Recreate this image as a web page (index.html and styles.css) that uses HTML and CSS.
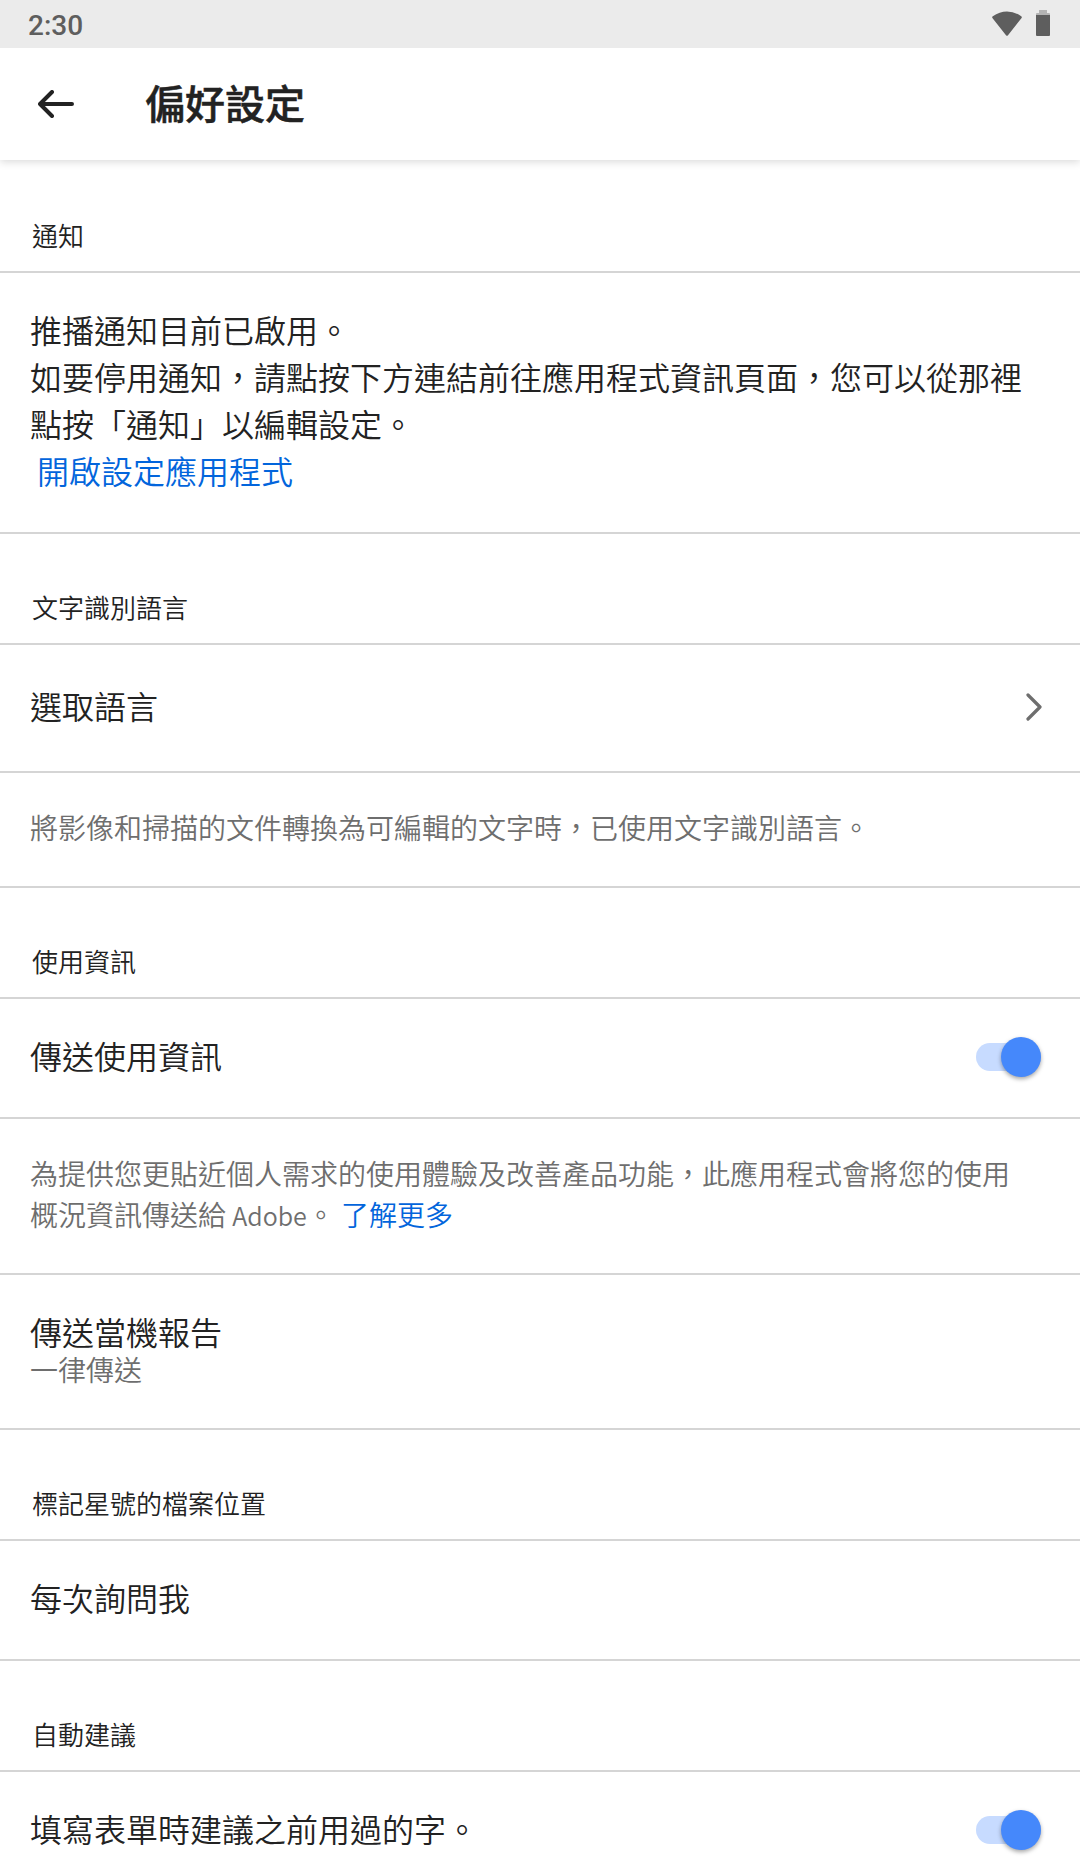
FILE: index.html
```
<!DOCTYPE html>
<html lang="zh-Hant">
<head>
    <meta charset="UTF-8">
    <title>偏好設定</title>
    <link rel="stylesheet" href="styles.css">
</head>
<body>
    <div class="statusbar">
        <span class="time">2:30</span>
        <svg class="wifi" width="32" height="26" viewBox="0 0 32 26">
            <path d="M1.6 8.2Q0.6 7.2 1.8 6.3Q8.5 1.5 16 1.5T30.2 6.3Q31.4 7.2 30.4 8.2L17 25.2Q16 26.3 15 25.2Z" fill="#5e5e5e"/>
        </svg>
        <svg class="battery" width="14" height="26" viewBox="0 0 14 26">
            <path d="M3 0H11V3H13Q14 3 14 4V5H0V4Q0 3 1 3H3Z" fill="#b4b4b4"/>
            <path d="M0 5H14V25Q14 26 13 26H1Q0 26 0 25Z" fill="#5e5e5e"/>
        </svg>
    </div>
    <header class="topbar">
        <svg class="back" width="36" height="28" viewBox="0 0 36 28">
            <path d="M34 14H2M14 2L2 14L14 26" fill="none" stroke="#222" stroke-width="4" stroke-linecap="round" stroke-linejoin="round"/>
        </svg>
        <h1>偏好設定</h1>
    </header>
    <main>
        <h2>通知</h2>
        <div class="row notice">
            <p>推播通知目前已啟用。<br>如要停用通知，請點按下方連結前往應用程式資訊頁面，您可以從那裡點按「通知」以編輯設定。<br><a class="indent" href="#">開啟設定應用程式</a></p>
        </div>

        <h2>文字識別語言</h2>
        <div class="row select">
            <span class="label">選取語言</span>
            <svg class="chevron" width="16" height="28" viewBox="0 0 16 28">
                <path d="M2 2L14 14L2 26" fill="none" stroke="#6e6e6e" stroke-width="3.2" stroke-linecap="round" stroke-linejoin="round"/>
            </svg>
        </div>
        <div class="row desc ocr">
            <p>將影像和掃描的文件轉換為可編輯的文字時，已使用文字識別語言。</p>
        </div>

        <h2>使用資訊</h2>
        <div class="row">
            <span class="label">傳送使用資訊</span>
            <span class="switch"><span class="thumb"></span></span>
        </div>
        <div class="row desc usage">
            <p>為提供您更貼近個人需求的使用體驗及改善產品功能，此應用程式會將您的使用概況資訊傳送給 <span class="latin">Adobe</span>。 <a href="#">了解更多</a></p>
        </div>
        <div class="row crash">
            <span>傳送當機報告</span>
            <span class="value">一律傳送</span>
        </div>

        <h2>標記星號的檔案位置</h2>
        <div class="row">
            <span class="label">每次詢問我</span>
        </div>

        <h2>自動建議</h2>
        <div class="row">
            <span class="label">填寫表單時建議之前用過的字。</span>
            <span class="switch"><span class="thumb"></span></span>
        </div>
    </main>
</body>
</html>
```
FILE: styles.css
```
* {
    box-sizing: border-box;
}
body {
    margin: 0;
    height: 1868px;
    overflow: hidden;
    background-color: #fff;
    color: #222;
    font-family: "Noto Sans CJK TC", sans-serif;
    font-size: 32px;
    font-weight: 350;
}
h1, h2, p {
    margin: 0;
}
a {
    color: #0265dc;
    text-decoration: none;
}

.statusbar {
    position: relative;
    z-index: 1;
    display: flex;
    height: 48px;
    padding: 10px 30px 0 28px;
    background-color: #ebebeb;
}
.time {
    flex: 1;
    font-family: Roboto, sans-serif;
    font-size: 28px;
    font-weight: 500;
    line-height: 31px;
    color: #5e5e5e;
}
.wifi {
    margin-right: 13px;
}

.topbar {
    display: flex;
    align-items: center;
    height: 112px;
    padding-left: 38px;
    box-shadow: 0 2px 8px rgba(0, 0, 0, 0.15);
}
.topbar h1 {
    margin-left: 71px;
    padding-bottom: 4px;
    font-size: 40px;
    font-weight: 500;
    line-height: 60px;
    -webkit-text-stroke: 0.5px #222;
}

main {
    padding-top: 2px;
}
h2 {
    height: 111px;
    padding: 55px 32px 0;
    border-bottom: 2px solid #d5d5d5;
    font-size: 26px;
    font-weight: 350;
    line-height: 36px;
}
.row {
    display: flex;
    align-items: center;
    justify-content: space-between;
    height: 120px;
    padding: 0 30px 2px;
    border-bottom: 2px solid #d5d5d5;
}
.row p {
    padding-bottom: 3px;
}
.label {
    padding-bottom: 5px;
}
.notice {
    height: 261px;
    padding-right: 40px;
    line-height: 47px;
}
.indent {
    margin-left: 7px;
}
.select {
    height: 128px;
}
.chevron {
    margin-right: 8px;
}
.desc {
    padding-right: 60px;
    color: #6e6e6e;
    font-size: 28px;
    line-height: 41px;
}
.latin {
    font-size: 25px;
    line-height: 1;
}
.ocr {
    height: 115px;
}
.usage {
    height: 156px;
}
.crash {
    flex-direction: column;
    align-items: flex-start;
    justify-content: flex-start;
    height: 155px;
    padding-top: 36px;
    line-height: 40px;
}
.value {
    color: #6e6e6e;
    font-size: 28px;
    line-height: 37px;
}

.switch {
    display: flex;
    align-items: center;
    justify-content: flex-end;
    width: 65px;
    height: 28px;
    margin-right: 9px;
    border-radius: 14px;
    background-color: #c7dbff;
}
.thumb {
    width: 40px;
    height: 40px;
    flex: none;
    border-radius: 50%;
    background-color: #4588fb;
    box-shadow: 0 2px 4px rgba(0, 0, 0, 0.35);
}
```
